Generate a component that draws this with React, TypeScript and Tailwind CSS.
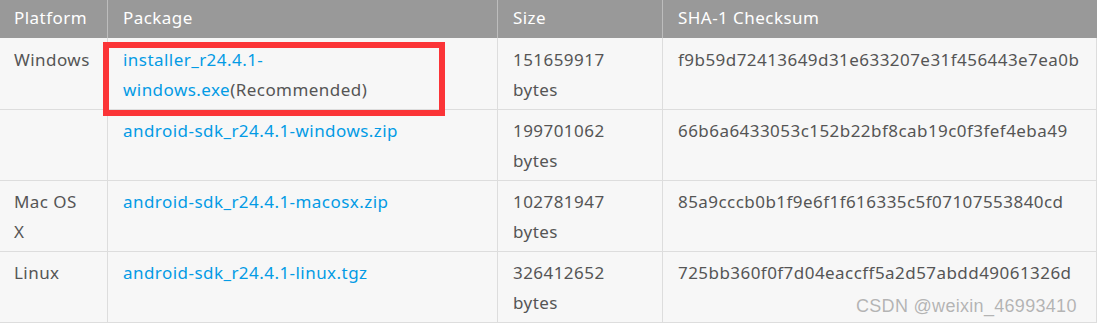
import React from 'react';

type Row = {
  platform: React.ReactNode;
  pkg: React.ReactNode;
  size: string;
  sha: string;
  first?: boolean;
};

const linkCls = 'text-[#039be5]';

const rows: Row[] = [
  {
    platform: 'Windows',
    pkg: (
      <>
        <span className={linkCls}>installer_r24.4.1-</span>
        <br />
        <span className={linkCls}>windows.exe</span>(Recommended)
      </>
    ),
    size: '151659917',
    sha: 'f9b59d72413649d31e633207e31f456443e7ea0b',
    first: true,
  },
  {
    platform: '',
    pkg: <span className={linkCls}>android-sdk_r24.4.1-windows.zip</span>,
    size: '199701062',
    sha: '66b6a6433053c152b22bf8cab19c0f3fef4eba49',
  },
  {
    platform: (
      <>
        Mac OS
        <br />X
      </>
    ),
    pkg: <span className={linkCls}>android-sdk_r24.4.1-macosx.zip</span>,
    size: '102781947',
    sha: '85a9cccb0b1f9e6f1f616335c5f07107553840cd',
  },
  {
    platform: 'Linux',
    pkg: <span className={linkCls}>android-sdk_r24.4.1-linux.tgz</span>,
    size: '326412652',
    sha: '725bb360f0f7d04eaccff5a2d57abdd49061326d',
  },
];

const cols = 'grid grid-cols-[107px_390px_165px_435px]';

export default function App() {
  return (
    <div className="relative w-[1101px] h-[325px] bg-white font-['Noto_Sans','Open_Sans',sans-serif] text-[17px] leading-[30px] tracking-[0.45px] text-[#555]">
      <div className="w-[1097px]">
        {/* header */}
        <div className={`${cols} h-[38px] bg-[#999] text-white`}>
          <div className="pl-[14px] pt-[3px]">Platform</div>
          <div className="pl-[15px] pt-[3px] border-l border-[#bdbdbd]">Package</div>
          <div className="pl-[15px] pt-[3px] border-l border-[#bdbdbd]">Size</div>
          <div className="pl-[15px] pt-[3px] border-l border-[#bdbdbd]">SHA-1 Checksum</div>
        </div>

        {rows.map((r, i) => (
          <div
            key={i}
            className={`${cols} ${r.first ? 'h-[72px] pt-[7px]' : 'h-[71px] pt-[6px]'} bg-[#f7f7f7] border-b border-[#ddd]`}
          >
            <div className="pl-[14px]">{r.platform}</div>
            <div className="pl-[15px] border-l border-[#ddd] -mt-[7px] pt-[7px]">{r.pkg}</div>
            <div className="pl-[15px] border-l border-[#ddd] -mt-[7px] pt-[7px]">
              {r.size}
              <br />
              bytes
            </div>
            <div className="pl-[15px] border-l border-r border-[#ddd] -mt-[7px] pt-[7px]">{r.sha}</div>
          </div>
        ))}
      </div>

      {/* red annotation box */}
      <div className="absolute left-[103px] top-[42px] w-[342px] h-[74px] border-[6px] border-[#fb3437]" />

      {/* watermark */}
      <div className="absolute left-[856px] top-[294px] text-[18px] leading-[24px] tracking-[0.3px] text-[#b4b4b4] font-['Liberation_Sans',sans-serif] [text-shadow:0_0_1px_#fff]">
        CSDN @weixin_46993410
      </div>
    </div>
  );
}
